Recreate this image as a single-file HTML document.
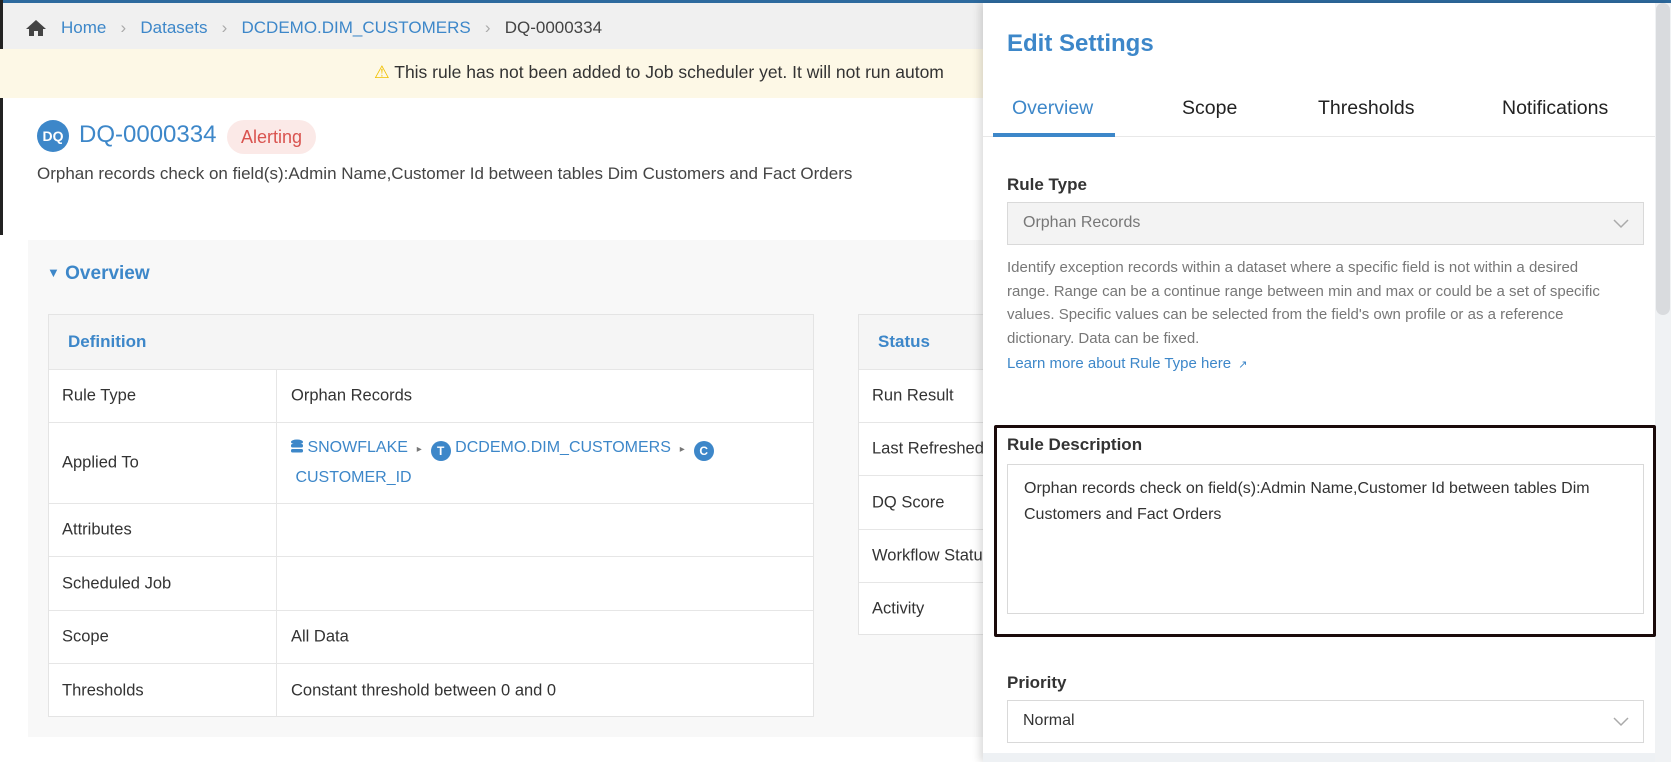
<!DOCTYPE html>
<html><head><meta charset="utf-8">
<style>
*{box-sizing:border-box;margin:0;padding:0}
body{width:1671px;height:762px;overflow:hidden;position:relative;background:#fff;font-family:"Liberation Sans",Arial,sans-serif;color:#333}
.a{position:absolute;white-space:nowrap}
.blue{color:#3d87c9}
.t{position:absolute;border:1px solid #e4e4e4;background:#fff}
.row{position:absolute;left:0;right:0;border-top:1px solid #e6e6e6;font-size:16.5px}
.row>span,.row>div{position:absolute;top:50%;transform:translateY(-50%)}
.c1{left:13px}.c2{left:242px}
.vline{position:absolute;left:227px;top:54px;bottom:0;border-left:1px solid #e6e6e6}
.ic{display:inline-block;width:20px;height:20px;border-radius:50%;background:#3d87c9;color:#fff;font-size:12px;font-weight:bold;text-align:center;line-height:20px;vertical-align:-3px}
.lbl{position:absolute;font-size:17px;font-weight:bold;color:#333}
.sel{position:absolute;border:1px solid #d9d9d9;font-size:16px}
</style></head><body>
<div class="a" style="left:0;top:0;width:1671px;height:3px;background:#2d6a9e"></div>
<div class="a" style="left:0;top:3px;width:983px;height:46px;background:#f0f0f0"></div>
<div class="a" style="left:0;top:0;width:3px;height:235px;background:#222"></div>
<svg class="a" style="left:25px;top:19px" width="22" height="18" viewBox="0 0 22 18"><path d="M11 1 L1 10 H4 V17 H9 V12 H13 V17 H18 V10 H21 Z" fill="#444"/></svg>
<div class="a" style="left:61px;top:18px;font-size:17px;color:#777"><span class="blue">Home</span>&nbsp;&nbsp;&nbsp;<span style="color:#aaa">›</span>&nbsp;&nbsp;&nbsp;<span class="blue">Datasets</span>&nbsp;&nbsp;&nbsp;<span style="color:#aaa">›</span>&nbsp;&nbsp;&nbsp;<span class="blue">DCDEMO.DIM_CUSTOMERS</span>&nbsp;&nbsp;&nbsp;<span style="color:#aaa">›</span>&nbsp;&nbsp;&nbsp;<span style="color:#444">DQ-0000334</span></div>
<div class="a" style="left:0;top:49px;width:983px;height:49px;background:#fdf8e6"></div>
<div class="a" style="left:374px;top:62px;font-size:17.5px;color:#333"><span style="color:#f0c000">⚠</span> This rule has not been added to Job scheduler yet. It will not run autom</div>
<div class="a" style="left:37px;top:120px;width:32px;height:32px;border-radius:50%;background:#3d87c9;color:#fff;font-weight:bold;font-size:14px;text-align:center;line-height:32px">DQ</div>
<div class="a blue" style="left:79px;top:121px;font-size:24px">DQ-0000334</div>
<div class="a" style="left:227px;top:120px;width:89px;height:34px;border-radius:17px;background:#fbe9e7;color:#d9534f;font-size:18px;text-align:center;line-height:34px">Alerting</div>
<div class="a" style="left:37px;top:164px;font-size:17px;color:#444">Orphan records check on field(s):Admin Name,Customer Id between tables Dim Customers and Fact Orders</div>
<div class="a" style="left:28px;top:240px;width:960px;height:497px;background:#f8f8f8"></div>
<div class="a blue" style="left:47px;top:263px;font-size:19px;font-weight:bold"><span style="font-size:13px;vertical-align:2px">▼</span> Overview</div>
<div class="t" style="left:48px;top:314px;width:766px;height:403px">
 <div style="position:absolute;left:0;right:0;top:0;height:54px;background:#f5f5f5"></div>
 <div class="a blue" style="left:19px;top:17px;font-size:17px;font-weight:bold">Definition</div>
 <div class="vline"></div>
 <div class="row" style="top:54px;height:53px"><span class="c1">Rule Type</span><span class="c2">Orphan Records</span></div>
 <div class="row" style="top:107px;height:81px"><span class="c1">Applied To</span><div class="c2 blue" style="line-height:28px;white-space:nowrap;font-size:16px">
 <svg width="12" height="14" viewBox="0 0 12 14" style="vertical-align:-1px"><ellipse cx="6" cy="3" rx="6" ry="2.5" fill="#3d87c9"/><rect x="0" y="5" width="12" height="3.5" rx="1.5" fill="#3d87c9"/><rect x="0" y="10" width="12" height="3.5" rx="1.5" fill="#3d87c9"/></svg> SNOWFLAKE &nbsp;<i style="color:#777;font-size:10px;font-style:normal">▸</i>&nbsp; <b class="ic">T</b> DCDEMO.DIM_CUSTOMERS &nbsp;<i style="color:#777;font-size:10px;font-style:normal">▸</i>&nbsp; <b class="ic">C</b><br>&nbsp;CUSTOMER_ID</div></div>
 <div class="row" style="top:188px;height:53px"><span class="c1">Attributes</span></div>
 <div class="row" style="top:241px;height:54px"><span class="c1">Scheduled Job</span></div>
 <div class="row" style="top:295px;height:53px"><span class="c1">Scope</span><span class="c2">All Data</span></div>
 <div class="row" style="top:348px;height:54px"><span class="c1">Thresholds</span><span class="c2">Constant threshold between 0 and 0</span></div>
</div>
<div class="t" style="left:858px;top:314px;width:200px;height:321px">
 <div style="position:absolute;left:0;right:0;top:0;height:54px;background:#f5f5f5"></div>
 <div class="a blue" style="left:19px;top:17px;font-size:17px;font-weight:bold">Status</div>
 <div class="row" style="top:54px;height:53px"><span class="c1">Run Result</span></div>
 <div class="row" style="top:107px;height:53px"><span class="c1">Last Refreshed</span></div>
 <div class="row" style="top:160px;height:54px"><span class="c1">DQ Score</span></div>
 <div class="row" style="top:214px;height:53px"><span class="c1">Workflow Status</span></div>
 <div class="row" style="top:267px;height:53px"><span class="c1">Activity</span></div>
</div>
<!-- panel -->
<div class="a" style="left:983px;top:3px;width:688px;height:759px;background:#fff;box-shadow:-3px 0 8px rgba(0,0,0,.15)"></div>
<div class="a" style="left:1655px;top:3px;width:16px;height:759px;background:#f0f2f4"></div>
<div class="a" style="left:1656px;top:3px;width:14px;height:312px;border-radius:7px;background:#d9dbde"></div>
<div class="a" style="left:983px;top:753px;width:672px;height:9px;background:#eef1f4"></div>
<div class="a blue" style="left:1007px;top:30px;font-size:24px;font-weight:bold">Edit Settings</div>
<div class="a" style="left:983px;top:136px;width:672px;height:1px;background:#e8e8e8"></div>
<div class="a" style="left:993px;top:133px;width:122px;height:4px;background:#3d87c9"></div>
<div class="a blue" style="left:1012px;top:97px;font-size:19.5px">Overview</div>
<div class="a" style="left:1182px;top:97px;font-size:19.5px;color:#222">Scope</div>
<div class="a" style="left:1318px;top:97px;font-size:19.5px;color:#222">Thresholds</div>
<div class="a" style="left:1502px;top:97px;font-size:19.5px;color:#222">Notifications</div>
<div class="lbl" style="left:1007px;top:175px">Rule Type</div>
<div class="sel" style="left:1007px;top:202px;width:637px;height:43px;background:#f3f3f3;color:#777"><span style="position:absolute;left:15px;top:11px">Orphan Records</span><svg style="position:absolute;right:14px;top:16px" width="16" height="10"><path d="M1 1 L8 8 L15 1" stroke="#aaa" stroke-width="1.5" fill="none"/></svg></div>
<div class="a" style="left:1007px;top:256px;font-size:15px;line-height:23.5px;color:#777;white-space:normal;width:605px">Identify exception records within a dataset where a specific field is not within a desired range. Range can be a continue range between min and max or could be a set of specific values. Specific values can be selected from the field's own profile or as a reference dictionary. Data can be fixed.</div>
<div class="a blue" style="left:1007px;top:355px;font-size:15px">Learn more about Rule Type here <span style="font-size:11px">&nbsp;↗</span></div>
<div class="a" style="left:994px;top:425px;width:662px;height:212px;border:3px solid #1a0a0a;border-radius:2px"></div>
<div class="lbl" style="left:1007px;top:435px">Rule Description</div>
<div class="sel" style="left:1007px;top:464px;width:637px;height:150px"><div style="position:absolute;left:16px;top:11px;font-size:16px;line-height:26px;color:#333;width:600px">Orphan records check on field(s):Admin Name,Customer Id between tables Dim Customers and Fact Orders</div></div>
<div class="lbl" style="left:1007px;top:673px">Priority</div>
<div class="sel" style="left:1007px;top:700px;width:637px;height:43px;color:#333"><span style="position:absolute;left:15px;top:11px">Normal</span><svg style="position:absolute;right:14px;top:16px" width="16" height="10"><path d="M1 1 L8 8 L15 1" stroke="#aaa" stroke-width="1.5" fill="none"/></svg></div>
</body></html>
